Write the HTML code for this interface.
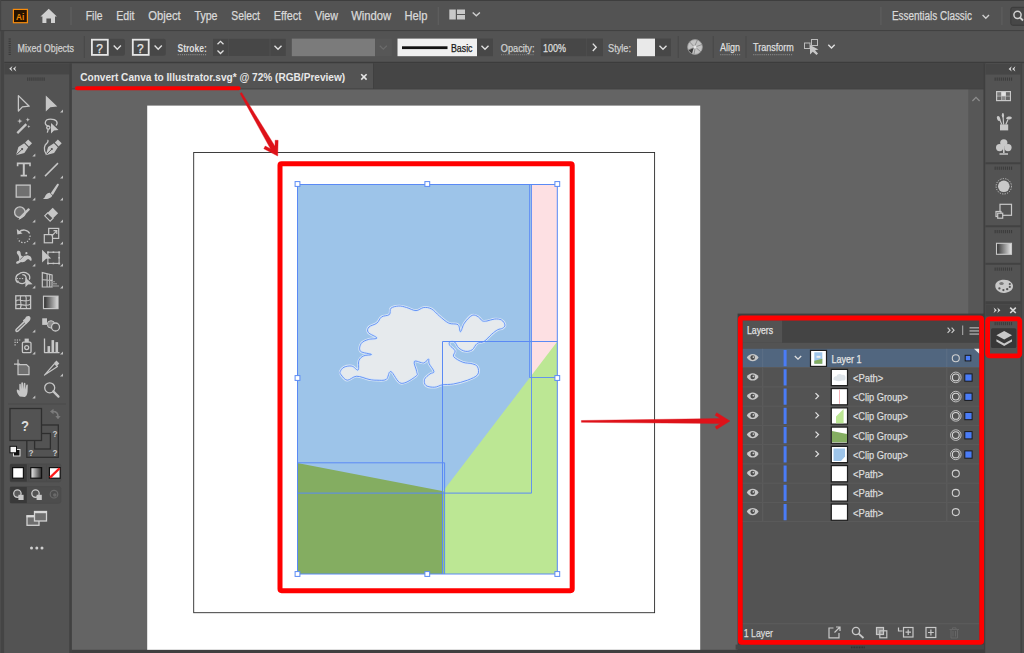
<!DOCTYPE html>
<html><head><meta charset="utf-8"><title>Illustrator</title>
<style>html,body{margin:0;padding:0;background:#535353;overflow:hidden}svg{display:block}text{font-family:"Liberation Sans", sans-serif;}</style></head>
<body><svg width="1024" height="653" viewBox="0 0 1024 653">
<rect x="0" y="0" width="1024" height="653" fill="#535353" />
<rect x="0" y="0" width="1024" height="1" fill="#3e3e3e" />
<rect x="0" y="0" width="1.2" height="31" fill="#454545" />
<rect x="0" y="30" width="1024" height="1.3" fill="#414141" />
<rect x="0.6" y="31" width="3.7" height="622" fill="#444444" />
<rect x="4.3" y="31.3" width="1020" height="30.5" fill="#535353" />
<rect x="4.3" y="61.8" width="1020" height="1.6" fill="#3c3c3c" />
<rect x="13.4" y="9.4" width="14" height="13.3" fill="#261300" stroke="#fa8c0a" stroke-width="1.2"/>
<text x="16" y="20.2" font-size="9" fill="#ee8a06" font-weight="700" textLength="8.2" lengthAdjust="spacingAndGlyphs" >Ai</text>
<path d="M40.5 16.6 L48.7 8.7 L56.9 16.6 L55 16.6 L55 23 L51 23 L51 18.5 L46.4 18.5 L46.4 23 L42.4 23 L42.4 16.6 Z" fill="#d0d0d0"/>
<rect x="70.4" y="7" width="1.2" height="18" fill="#5f5f5f" />
<text x="85.75" y="20" font-size="12" fill="#d9d9d9" stroke="#d9d9d9" stroke-width="0.25" textLength="16.75" lengthAdjust="spacingAndGlyphs" >File</text>
<text x="116.25" y="20" font-size="12" fill="#d9d9d9" stroke="#d9d9d9" stroke-width="0.25" textLength="18.25" lengthAdjust="spacingAndGlyphs" >Edit</text>
<text x="148.25" y="20" font-size="12" fill="#d9d9d9" stroke="#d9d9d9" stroke-width="0.25" textLength="32.5" lengthAdjust="spacingAndGlyphs" >Object</text>
<text x="194.5" y="20" font-size="12" fill="#d9d9d9" stroke="#d9d9d9" stroke-width="0.25" textLength="23" lengthAdjust="spacingAndGlyphs" >Type</text>
<text x="231.25" y="20" font-size="12" fill="#d9d9d9" stroke="#d9d9d9" stroke-width="0.25" textLength="28.75" lengthAdjust="spacingAndGlyphs" >Select</text>
<text x="273.75" y="20" font-size="12" fill="#d9d9d9" stroke="#d9d9d9" stroke-width="0.25" textLength="27.5" lengthAdjust="spacingAndGlyphs" >Effect</text>
<text x="315" y="20" font-size="12" fill="#d9d9d9" stroke="#d9d9d9" stroke-width="0.25" textLength="23" lengthAdjust="spacingAndGlyphs" >View</text>
<text x="351.25" y="20" font-size="12" fill="#d9d9d9" stroke="#d9d9d9" stroke-width="0.25" textLength="40" lengthAdjust="spacingAndGlyphs" >Window</text>
<text x="404.5" y="20" font-size="12" fill="#d9d9d9" stroke="#d9d9d9" stroke-width="0.25" textLength="23" lengthAdjust="spacingAndGlyphs" >Help</text>
<rect x="437.7" y="7" width="1.2" height="18" fill="#5f5f5f" />
<rect x="449.3" y="9.5" width="6.5" height="10" fill="#c8c8c8" />
<rect x="457" y="9.5" width="8" height="4.5" fill="#c8c8c8" />
<rect x="457" y="15" width="8" height="4.5" fill="#c8c8c8" />
<path d="M472.7 12.4 L476.3 15.8 L479.9 12.4" fill="none" stroke="#cfcfcf" stroke-width="1.4"/>
<rect x="880.3" y="7" width="1.2" height="18" fill="#5f5f5f" />
<text x="892" y="19.7" font-size="12" fill="#d9d9d9" stroke="#d9d9d9" stroke-width="0.25" textLength="80" lengthAdjust="spacingAndGlyphs" >Essentials Classic</text>
<path d="M982.6 15 L985.8 18.2 L989 15" fill="none" stroke="#cfcfcf" stroke-width="1.4"/>
<rect x="1001.3" y="7" width="1.2" height="18" fill="#5f5f5f" />
<rect x="1010.8" y="7.3" width="20" height="18" rx="2" fill="#474747" stroke="#3a3a3a" stroke-width="1"/>
<circle cx="1017.5" cy="14.8" r="3.6" fill="none" stroke="#d0d0d0" stroke-width="1.5"/><path d="M1020 17.5 L1023 20.5" stroke="#d0d0d0" stroke-width="1.8"/>
<rect x="8.6" y="38.5" width="2.2" height="1.1" fill="#3a3a3a" />
<rect x="8.6" y="40.7" width="2.2" height="1.1" fill="#3a3a3a" />
<rect x="8.6" y="42.9" width="2.2" height="1.1" fill="#3a3a3a" />
<rect x="8.6" y="45.1" width="2.2" height="1.1" fill="#3a3a3a" />
<rect x="8.6" y="47.3" width="2.2" height="1.1" fill="#3a3a3a" />
<rect x="8.6" y="49.5" width="2.2" height="1.1" fill="#3a3a3a" />
<rect x="8.6" y="51.7" width="2.2" height="1.1" fill="#3a3a3a" />
<rect x="8.6" y="53.900000000000006" width="2.2" height="1.1" fill="#3a3a3a" />
<text x="17.6" y="52.1" font-size="10" fill="#cfcfcf" stroke="#cfcfcf" stroke-width="0.25" textLength="56.4" lengthAdjust="spacingAndGlyphs" >Mixed Objects</text>
<rect x="83.8" y="36" width="1" height="22" fill="#484848" />
<rect x="105" y="38.8" width="19.9" height="17" rx="2" fill="#474747"/>
<rect x="91.9" y="39.7" width="15.9" height="15.2" fill="#4a4a4a" stroke="#e6e6e6" stroke-width="1.8"/>
<text x="96.2" y="52.7" font-size="12" fill="#e6e6e6" stroke="#e6e6e6" stroke-width="0.25" textLength="6.6" lengthAdjust="spacingAndGlyphs" >?</text>
<path d="M113.7 45.6 L117.3 49.2 L120.9 45.6" fill="none" stroke="#e0e0e0" stroke-width="1.4"/>
<rect x="145.9" y="38.8" width="19.9" height="17" rx="2" fill="#474747"/>
<rect x="132.8" y="39.7" width="15.9" height="15.2" fill="#4a4a4a" stroke="#e6e6e6" stroke-width="1.8"/>
<text x="137.1" y="52.7" font-size="12" fill="#e6e6e6" stroke="#e6e6e6" stroke-width="0.25" textLength="6.6" lengthAdjust="spacingAndGlyphs" >?</text>
<path d="M154.6 45.6 L158.20000000000002 49.2 L161.8 45.6" fill="none" stroke="#e0e0e0" stroke-width="1.4"/>
<text x="177.5" y="51.5" font-size="10" fill="#dedede" font-weight="700" textLength="29.3" lengthAdjust="spacingAndGlyphs" >Stroke:</text>
<rect x="177.7" y="54.3" width="1.1" height="0.9" fill="#a0a0a0" />
<rect x="179.79999999999998" y="54.3" width="1.1" height="0.9" fill="#a0a0a0" />
<rect x="181.89999999999998" y="54.3" width="1.1" height="0.9" fill="#a0a0a0" />
<rect x="184.0" y="54.3" width="1.1" height="0.9" fill="#a0a0a0" />
<rect x="186.1" y="54.3" width="1.1" height="0.9" fill="#a0a0a0" />
<rect x="188.2" y="54.3" width="1.1" height="0.9" fill="#a0a0a0" />
<rect x="190.29999999999998" y="54.3" width="1.1" height="0.9" fill="#a0a0a0" />
<rect x="192.39999999999998" y="54.3" width="1.1" height="0.9" fill="#a0a0a0" />
<rect x="194.5" y="54.3" width="1.1" height="0.9" fill="#a0a0a0" />
<rect x="196.6" y="54.3" width="1.1" height="0.9" fill="#a0a0a0" />
<rect x="198.7" y="54.3" width="1.1" height="0.9" fill="#a0a0a0" />
<rect x="200.79999999999998" y="54.3" width="1.1" height="0.9" fill="#a0a0a0" />
<rect x="202.89999999999998" y="54.3" width="1.1" height="0.9" fill="#a0a0a0" />
<rect x="205.0" y="54.3" width="1.1" height="0.9" fill="#a0a0a0" />
<rect x="213" y="38.8" width="15" height="17.2" fill="#474747" />
<path d="M217.5 44.3 L220.5 41.3 L223.5 44.3 M217.5 50.5 L220.5 53.5 L223.5 50.5" fill="none" stroke="#e0e0e0" stroke-width="1.3"/>
<rect x="228.6" y="38.8" width="41" height="17.2" fill="#474747" />
<rect x="270.4" y="38.8" width="15.4" height="17.2" fill="#474747" />
<path d="M274.5 45.8 L278 49.2 L281.5 45.8" fill="none" stroke="#e0e0e0" stroke-width="1.4"/>
<rect x="291.8" y="38.6" width="83.3" height="17.6" fill="#7b7b7b" />
<rect x="375.1" y="38.6" width="16.7" height="17.6" fill="#575757" />
<path d="M379.8 45.8 L383.3 49.2 L386.8 45.8" fill="none" stroke="#6b6b6b" stroke-width="1.3"/>
<rect x="397.5" y="38.6" width="79.5" height="17.6" fill="#f0f0f0" />
<rect x="402" y="46.3" width="45.5" height="2.8" fill="#111111" />
<text x="451" y="52.1" font-size="10" fill="#1a1a1a" stroke="#1a1a1a" stroke-width="0.25" textLength="21.5" lengthAdjust="spacingAndGlyphs" >Basic</text>
<rect x="477" y="38.6" width="16" height="17.6" fill="#474747" />
<path d="M481.5 45.8 L485 49.2 L488.5 45.8" fill="none" stroke="#e0e0e0" stroke-width="1.4"/>
<text x="500.8" y="52.1" font-size="10" fill="#cfcfcf" stroke="#cfcfcf" stroke-width="0.25" textLength="33.7" lengthAdjust="spacingAndGlyphs" >Opacity:</text>
<rect x="501.0" y="54.3" width="1.1" height="0.9" fill="#8a8a8a" />
<rect x="503.1" y="54.3" width="1.1" height="0.9" fill="#8a8a8a" />
<rect x="505.2" y="54.3" width="1.1" height="0.9" fill="#8a8a8a" />
<rect x="507.3" y="54.3" width="1.1" height="0.9" fill="#8a8a8a" />
<rect x="509.4" y="54.3" width="1.1" height="0.9" fill="#8a8a8a" />
<rect x="511.5" y="54.3" width="1.1" height="0.9" fill="#8a8a8a" />
<rect x="513.6" y="54.3" width="1.1" height="0.9" fill="#8a8a8a" />
<rect x="515.7" y="54.3" width="1.1" height="0.9" fill="#8a8a8a" />
<rect x="517.8" y="54.3" width="1.1" height="0.9" fill="#8a8a8a" />
<rect x="519.9" y="54.3" width="1.1" height="0.9" fill="#8a8a8a" />
<rect x="522.0" y="54.3" width="1.1" height="0.9" fill="#8a8a8a" />
<rect x="524.1" y="54.3" width="1.1" height="0.9" fill="#8a8a8a" />
<rect x="526.2" y="54.3" width="1.1" height="0.9" fill="#8a8a8a" />
<rect x="528.3" y="54.3" width="1.1" height="0.9" fill="#8a8a8a" />
<rect x="530.4" y="54.3" width="1.1" height="0.9" fill="#8a8a8a" />
<rect x="532.5" y="54.3" width="1.1" height="0.9" fill="#8a8a8a" />
<rect x="540.8" y="38.6" width="45.2" height="17.6" fill="#474747" />
<text x="543" y="52.1" font-size="10" fill="#dedede" stroke="#dedede" stroke-width="0.25" textLength="23" lengthAdjust="spacingAndGlyphs" >100%</text>
<rect x="586.5" y="38.6" width="16.5" height="17.6" fill="#474747" />
<path d="M592.8 43.6 L596.2 47.3 L592.8 51" fill="none" stroke="#e0e0e0" stroke-width="1.4"/>
<text x="608" y="52.1" font-size="10" fill="#cfcfcf" stroke="#cfcfcf" stroke-width="0.25" textLength="23" lengthAdjust="spacingAndGlyphs" >Style:</text>
<rect x="637" y="38.6" width="18" height="17.6" fill="#e9e9e9" />
<rect x="655" y="38.6" width="16" height="17.6" fill="#474747" />
<path d="M659.5 45.8 L663 49.2 L666.5 45.8" fill="none" stroke="#e0e0e0" stroke-width="1.4"/>
<rect x="677.7" y="36" width="1" height="22" fill="#484848" />
<circle cx="695" cy="47" r="7.4" fill="#c4c4c4" stroke="#9a9a9a" stroke-width="0.8"/><circle cx="695" cy="47" r="1.6" fill="#e8e8e8"/>
<path d="M695 45.4 L697.5 39.8 M696.5 46.5 L702 44.5 M696.4 48 L701 52 M695 48.6 L694 54.3 M693.5 47.8 L688 50 M693.6 46.2 L689.5 41.8" stroke="#8a8a8a" stroke-width="0.9"/><path d="M688.5 50.2 L693.6 48 L692 53.8 Z" fill="#3a3a3a"/>
<rect x="712.7" y="36" width="1" height="22" fill="#484848" />
<text x="720" y="51.3" font-size="10" fill="#dedede" stroke="#dedede" stroke-width="0.25" textLength="20" lengthAdjust="spacingAndGlyphs" >Align</text>
<rect x="720.2" y="54.3" width="1.1" height="0.9" fill="#9a9a9a" />
<rect x="722.3000000000001" y="54.3" width="1.1" height="0.9" fill="#9a9a9a" />
<rect x="724.4000000000001" y="54.3" width="1.1" height="0.9" fill="#9a9a9a" />
<rect x="726.5" y="54.3" width="1.1" height="0.9" fill="#9a9a9a" />
<rect x="728.6" y="54.3" width="1.1" height="0.9" fill="#9a9a9a" />
<rect x="730.7" y="54.3" width="1.1" height="0.9" fill="#9a9a9a" />
<rect x="732.8000000000001" y="54.3" width="1.1" height="0.9" fill="#9a9a9a" />
<rect x="734.9000000000001" y="54.3" width="1.1" height="0.9" fill="#9a9a9a" />
<rect x="737.0" y="54.3" width="1.1" height="0.9" fill="#9a9a9a" />
<rect x="739.1" y="54.3" width="1.1" height="0.9" fill="#9a9a9a" />
<rect x="745.5" y="36" width="1" height="22" fill="#484848" />
<text x="753" y="51.3" font-size="10" fill="#dedede" stroke="#dedede" stroke-width="0.25" textLength="40.8" lengthAdjust="spacingAndGlyphs" >Transform</text>
<rect x="753.2" y="54.3" width="1.1" height="0.9" fill="#9a9a9a" />
<rect x="755.3000000000001" y="54.3" width="1.1" height="0.9" fill="#9a9a9a" />
<rect x="757.4000000000001" y="54.3" width="1.1" height="0.9" fill="#9a9a9a" />
<rect x="759.5" y="54.3" width="1.1" height="0.9" fill="#9a9a9a" />
<rect x="761.6" y="54.3" width="1.1" height="0.9" fill="#9a9a9a" />
<rect x="763.7" y="54.3" width="1.1" height="0.9" fill="#9a9a9a" />
<rect x="765.8000000000001" y="54.3" width="1.1" height="0.9" fill="#9a9a9a" />
<rect x="767.9000000000001" y="54.3" width="1.1" height="0.9" fill="#9a9a9a" />
<rect x="770.0" y="54.3" width="1.1" height="0.9" fill="#9a9a9a" />
<rect x="772.1" y="54.3" width="1.1" height="0.9" fill="#9a9a9a" />
<rect x="774.2" y="54.3" width="1.1" height="0.9" fill="#9a9a9a" />
<rect x="776.3000000000001" y="54.3" width="1.1" height="0.9" fill="#9a9a9a" />
<rect x="778.4000000000001" y="54.3" width="1.1" height="0.9" fill="#9a9a9a" />
<rect x="780.5" y="54.3" width="1.1" height="0.9" fill="#9a9a9a" />
<rect x="782.6" y="54.3" width="1.1" height="0.9" fill="#9a9a9a" />
<rect x="784.7" y="54.3" width="1.1" height="0.9" fill="#9a9a9a" />
<rect x="786.8000000000001" y="54.3" width="1.1" height="0.9" fill="#9a9a9a" />
<rect x="788.9000000000001" y="54.3" width="1.1" height="0.9" fill="#9a9a9a" />
<rect x="791.0" y="54.3" width="1.1" height="0.9" fill="#9a9a9a" />
<rect x="804.5" y="43" width="5.5" height="5.5" fill="none" stroke="#bcbcbc" stroke-width="1"/>
<rect x="811.5" y="39.5" width="6" height="6" fill="none" stroke="#bcbcbc" stroke-width="1"/>
<path d="M810 45 L810 54.5 L812.8 51.8 L816.5 55 L818 53.5 L815 50.2 L818.5 49.5 Z" fill="#c8c8c8"/>
<path d="M828.3 44.8 L831.5 48 L834.7 44.8" fill="none" stroke="#e0e0e0" stroke-width="1.4"/>
<rect x="4.3" y="63.4" width="65.2" height="590" fill="#535353" />
<rect x="4.3" y="63.4" width="65.2" height="11" fill="#464646" />
<path d="M12.5 66 L9.2 68.8 L12.5 71.6 L11.3 68.8 Z M16.3 66 L13 68.8 L16.3 71.6 L15.1 68.8 Z" fill="#dcdcdc"/>
<rect x="27.2" y="77.4" width="1.1" height="3.4" fill="#3c3c3c" />
<rect x="29.25" y="77.4" width="1.1" height="3.4" fill="#3c3c3c" />
<rect x="31.299999999999997" y="77.4" width="1.1" height="3.4" fill="#3c3c3c" />
<rect x="33.35" y="77.4" width="1.1" height="3.4" fill="#3c3c3c" />
<rect x="35.4" y="77.4" width="1.1" height="3.4" fill="#3c3c3c" />
<rect x="37.45" y="77.4" width="1.1" height="3.4" fill="#3c3c3c" />
<rect x="39.5" y="77.4" width="1.1" height="3.4" fill="#3c3c3c" />
<rect x="41.55" y="77.4" width="1.1" height="3.4" fill="#3c3c3c" />
<rect x="43.599999999999994" y="77.4" width="1.1" height="3.4" fill="#3c3c3c" />
<rect x="69.3" y="63.4" width="2.6" height="590" fill="#414141" />
<g transform="translate(15.8,95.6)"><path d="M2.6 0 L2.6 15.5 L6.6 11.3 L13.4 10.6 Z" fill="none" stroke="#c6c6c6" stroke-width="1.3" stroke-linejoin="round"/></g>
<g transform="translate(43.5,95.6)"><path d="M2.3 0 L2.3 16 L6.8 11.6 L13.8 10.9 Z" fill="#c6c6c6"/></g>
<path d="M60.0 112.39999999999999 L63.0 112.39999999999999 L63.0 109.39999999999999 Z" fill="#c0c0c0"/>
<g transform="translate(15.8,117.6)"><path d="M1.5 15.5 L10.5 6.5" stroke="#c6c6c6" stroke-width="2.2"/><path d="M4 1 L4.7 3 L6.7 3.5 L4.7 4.2 L4 6.2 L3.3 4.2 L1.3 3.5 L3.3 3 Z M12 0 L12.6 1.6 L14.2 2.1 L12.6 2.6 L12 4.2 L11.4 2.6 L9.8 2.1 L11.4 1.6 Z M13 7.5 L13.5 8.6 L14.6 9 L13.5 9.4 L13 10.5 L12.5 9.4 L11.4 9 L12.5 8.6 Z" fill="#c6c6c6"/></g>
<g transform="translate(43.5,117.6)"><path d="M5 8.5 C0 7 1 1.5 7 1.5 C13 1.5 15 5 12.5 8" fill="none" stroke="#c6c6c6" stroke-width="1.3" stroke-linejoin="round"/><circle cx="4.8" cy="10" r="1.6" fill="none" stroke="#c6c6c6" stroke-width="1.3" stroke-linejoin="round"/><path d="M4.8 11.5 L3.8 15" fill="none" stroke="#c6c6c6" stroke-width="1.3" stroke-linejoin="round"/><path d="M7.5 5.5 L7.5 16 L10.5 12.8 L15 12.5 Z" fill="#c6c6c6"/></g>
<g transform="translate(15.8,139.6)"><path d="M0.2 15.6 L2.6 7.4 L8.4 3.6 L12.4 7.6 L8.6 13.4 Z" fill="#c6c6c6"/><path d="M9.3 3 L12.4 -0.1 L16.2 3.7 L13.1 6.8 Z" fill="#c6c6c6"/><path d="M0.6 15.2 L5.8 10" stroke="#535353" stroke-width="1"/><circle cx="6.3" cy="9.5" r="1.1" fill="#535353"/></g>
<path d="M32.3 156.4 L35.3 156.4 L35.3 153.4 Z" fill="#c0c0c0"/>
<g transform="translate(43.5,139.6)"><g transform="translate(2,0)"><path d="M0.2 15.6 L2.6 7.4 L8.4 3.6 L12.4 7.6 L8.6 13.4 Z" fill="#c6c6c6"/><path d="M9.3 3 L12.4 -0.1 L16.2 3.7 L13.1 6.8 Z" fill="#c6c6c6"/><path d="M0.6 15.2 L5.8 10" stroke="#535353" stroke-width="1"/><circle cx="6.3" cy="9.5" r="1.1" fill="#535353"/></g><path d="M3 15 C-1 10 1.5 5 3 4 C4.5 2.5 5 1 4 0.5" fill="none" stroke="#c6c6c6" stroke-width="1.3" stroke-linejoin="round" stroke-width="1"/></g>
<g transform="translate(15.8,161.6)"><path d="M1 0.8 L15 0.8 L15 4.6 L13.4 4.6 L13.4 2.6 L9 2.6 L9 13.2 L11.2 13.2 L11.2 14.8 L4.8 14.8 L4.8 13.2 L7 13.2 L7 2.6 L2.6 2.6 L2.6 4.6 L1 4.6 Z" fill="#c6c6c6"/></g>
<path d="M32.3 178.4 L35.3 178.4 L35.3 175.4 Z" fill="#c0c0c0"/>
<g transform="translate(43.5,161.6)"><path d="M1.5 14.5 L14.5 1.5" stroke="#c6c6c6" stroke-width="1.5"/></g>
<path d="M60.0 178.4 L63.0 178.4 L63.0 175.4 Z" fill="#c0c0c0"/>
<g transform="translate(15.7,183.6)"><rect x="0.5" y="1.5" width="14" height="12" fill="#707070" stroke="#c6c6c6" stroke-width="1.3"/></g>
<path d="M32.3 200.4 L35.3 200.4 L35.3 197.4 Z" fill="#c0c0c0"/>
<g transform="translate(43.5,183.6)"><path d="M7.2 9.6 L13.6 0.4 C14.4 -0.4 15.8 0.6 15.3 1.5 L9.4 11.4 Z" fill="#c6c6c6"/><path d="M6.2 9.2 C3.6 9 2 11.5 1.4 13.2 C1 14.4 0 15 -0.6 15.3 C2.5 15.8 7.5 15 8.8 11.8 Z" fill="#c6c6c6"/></g>
<path d="M60.0 200.4 L63.0 200.4 L63.0 197.4 Z" fill="#c0c0c0"/>
<g transform="translate(14.3,205.6)"><circle cx="5.6" cy="6.6" r="5.3" fill="#707070" stroke="#c6c6c6" stroke-width="1.4"/><path d="M4.2 14.4 L5.5 11 L13.6 2.8 C14.4 2 16.2 3.6 15.4 4.5 L7.3 12.7 Z" fill="#c6c6c6"/></g>
<path d="M32.3 222.4 L35.3 222.4 L35.3 219.4 Z" fill="#c0c0c0"/>
<g transform="translate(43.5,205.6)"><path d="M1.2 10.2 L9.2 2.2 L14.6 7.6 L6.6 15.6 Z" fill="#c6c6c6"/><path d="M1.2 10.2 L4.2 7.2 L9.6 12.6 L6.6 15.6 Z" fill="#535353" stroke="#c6c6c6" stroke-width="1.1"/></g>
<path d="M60.0 222.4 L63.0 222.4 L63.0 219.4 Z" fill="#c0c0c0"/>
<g transform="translate(15.8,227.6)"><path d="M3.2 4.5 C6 1.5 12 1.5 13.8 6" fill="none" stroke="#c6c6c6" stroke-width="1.3" stroke-linejoin="round" stroke-width="1.5"/><path d="M1 1.5 L1.5 7 L6.8 5.8 Z" fill="#c6c6c6"/><path d="M14.2 8 C14.5 12 11 15.5 7 15 C4 14.6 2.5 12.5 2 11" fill="none" stroke="#c6c6c6" stroke-width="1.3" stroke-dasharray="1.3 1.6"/></g>
<path d="M32.3 244.4 L35.3 244.4 L35.3 241.4 Z" fill="#c0c0c0"/>
<g transform="translate(43.5,227.6)"><rect x="5.2" y="0.8" width="10" height="10" fill="none" stroke="#c6c6c6" stroke-width="1.2"/><rect x="0.8" y="7" width="8.2" height="8.2" fill="#535353" stroke="#c6c6c6" stroke-width="1.2"/><path d="M8 8.5 L13 3.5 M10 3 L13.3 3 L13.3 6.3" fill="none" stroke="#c6c6c6" stroke-width="1.2"/></g>
<path d="M60.0 244.4 L63.0 244.4 L63.0 241.4 Z" fill="#c0c0c0"/>
<g transform="translate(15.8,249.60000000000002)"><path d="M1 3 C1 1 3.5 0.6 4.6 2.4 C5.2 4 4.6 5.5 6.2 6.5 C8 7.4 10 5.5 12.5 5.8 C15 6.1 16.2 8.5 15.7 10.8 C15.2 11.6 14.1 11.2 13.6 10.1 C12.8 9.2 11.2 9.6 10.2 11 C9 12.6 7 13 5.2 12.4 L2.6 14 C1.5 14.6 0 14.1 0.3 12.9 C0.6 11.8 2 11.6 3 11.2 C3.8 9 3.4 7.2 2.5 5.6 C1.8 4.8 1 4 1 3 Z" fill="#c6c6c6"/><path d="M4.2 10.2 L10.6 3.6" stroke="#6a6a6a" stroke-width="0.9"/><circle cx="10.6" cy="3.6" r="1.1" fill="#c6c6c6"/></g>
<path d="M32.3 266.40000000000003 L35.3 266.40000000000003 L35.3 263.40000000000003 Z" fill="#c0c0c0"/>
<g transform="translate(43.5,249.60000000000002)"><path d="M-1.4 0.2 L-1.4 12.9 L2.6 9.2 L7.7 8.9 Z" fill="#c6c6c6"/><rect x="4.4" y="2.6" width="11.2" height="11.2" fill="none" stroke="#c6c6c6" stroke-width="1.1"/><rect x="3.6" y="1.8" width="1.8" height="1.8" fill="#c6c6c6"/><rect x="14.8" y="1.8" width="1.8" height="1.8" fill="#c6c6c6"/><rect x="14.8" y="13" width="1.8" height="1.8" fill="#c6c6c6"/><rect x="3.6" y="13" width="1.8" height="1.8" fill="#c6c6c6"/><rect x="9.1" y="1.9" width="1.6" height="1.5" fill="#c6c6c6"/><rect x="9.1" y="13.1" width="1.6" height="1.5" fill="#c6c6c6"/><rect x="14.9" y="7.4" width="1.5" height="1.6" fill="#c6c6c6"/></g>
<path d="M60.0 266.40000000000003 L63.0 266.40000000000003 L63.0 263.40000000000003 Z" fill="#c0c0c0"/>
<g transform="translate(15.8,271.6)"><path d="M2 11 C-1 9 -0.5 3.5 3 2.5 C5 0.5 9.5 0.2 11.5 2 C14 2.8 14.5 6 13.5 8" fill="none" stroke="#c6c6c6" stroke-width="1.3" stroke-linejoin="round" stroke-width="1.3"/><path d="M6.5 3 C9 3 10.5 5 10.5 7.5 C10.5 10 9 12 6.5 12 C4 12 2 10.5 2 9" fill="none" stroke="#c6c6c6" stroke-width="1.3" stroke-linejoin="round" stroke-width="1.1"/><path d="M0.8 7 L8.6 7" stroke="#c6c6c6" stroke-width="1" stroke-dasharray="1.4 1.2"/><path d="M9.6 6 L9.6 15.6 L12.3 13 L16.8 12.6 Z" fill="#c6c6c6"/></g>
<path d="M32.3 288.40000000000003 L35.3 288.40000000000003 L35.3 285.40000000000003 Z" fill="#c0c0c0"/>
<g transform="translate(43.5,271.6)"><path d="M-1.2 1 L8.6 3.4 L8.6 15.4 L-1.2 15.4 Z" fill="none" stroke="#c6c6c6" stroke-width="1.2"/><path d="M3.6 2.2 L3.6 15.4 M-1.2 8.2 L8.6 8.8 M6.2 2.8 L6.2 15.4" stroke="#c6c6c6" stroke-width="1.1"/><path d="M8.6 14.4 L15.5 14.4 M8.6 12.2 L13.5 12.2 M8.6 10 L11.5 10" stroke="#8c8c8c" stroke-width="1.4"/></g>
<path d="M60.0 288.40000000000003 L63.0 288.40000000000003 L63.0 285.40000000000003 Z" fill="#c0c0c0"/>
<g transform="translate(15.8,293.6)"><rect x="0" y="2.2" width="14.8" height="12.8" fill="none" stroke="#c6c6c6" stroke-width="1.3"/><path d="M0 7.5 C4 4 8 10 14.8 6 M0 11.5 C5 9 9 14 14.8 10.5 M5 2.2 C3 6 7 10 4.5 15 M9.8 2.2 C12 6 8.5 11 11 15" fill="none" stroke="#c6c6c6" stroke-width="1.1"/></g>
<g transform="translate(43.5,293.6)"><defs><linearGradient id="tg1"><stop offset="0" stop-color="#2a2a2a"/><stop offset="1" stop-color="#dcdcdc"/></linearGradient></defs><rect x="0" y="2.6" width="14.5" height="12.4" fill="url(#tg1)" stroke="#c6c6c6" stroke-width="1.2"/></g>
<g transform="translate(15.8,315.6)"><path d="M8.6 6 L0.6 13.6 C-0.6 14.8 0.6 16.6 2 15.6 L10.2 7.6" fill="none" stroke="#c6c6c6" stroke-width="1.5" stroke-linejoin="round"/><path d="M7 4.8 L9.5 2.6 C10 0.4 13.6 -0.2 14.3 1.5 C15.4 2.8 14.2 5.6 12.4 6.6 L10.5 8.6 Z" fill="#c6c6c6"/></g>
<path d="M32.3 332.40000000000003 L35.3 332.40000000000003 L35.3 329.40000000000003 Z" fill="#c0c0c0"/>
<g transform="translate(43.5,315.6)"><rect x="-1.3" y="2.7" width="4.8" height="6.6" fill="#c6c6c6"/><circle cx="7.5" cy="8.8" r="3.7" fill="#8a8a8a" stroke="#c6c6c6" stroke-width="1"/><circle cx="12" cy="11.4" r="4" fill="#535353" stroke="#c6c6c6" stroke-width="1.3"/></g>
<g transform="translate(15.8,337.6)"><rect x="6.6" y="4.5" width="8.6" height="10.6" rx="1.2" fill="none" stroke="#c6c6c6" stroke-width="1.3"/><rect x="8.8" y="1" width="4.2" height="3.4" fill="#c6c6c6"/><circle cx="10.9" cy="10" r="2" fill="none" stroke="#c6c6c6" stroke-width="1.3" stroke-linejoin="round" stroke-width="1.2"/><path d="M-1.3 2.4 h1.2 M1 2.4 h1.2 M3.3 2.4 h1.2 M-1.3 4.8 h1.2 M1 4.8 h1.2 M-1.3 7.2 h1.2" stroke="#c6c6c6" stroke-width="1.2"/></g>
<path d="M32.3 354.40000000000003 L35.3 354.40000000000003 L35.3 351.40000000000003 Z" fill="#c0c0c0"/>
<g transform="translate(43.5,337.6)"><path d="M1 1 L1 15 L16 15" fill="none" stroke="#c6c6c6" stroke-width="1.3" stroke-linejoin="round" stroke-width="1.2"/><rect x="4" y="8.5" width="2.6" height="6.5" fill="#c6c6c6"/><rect x="8" y="2.5" width="2.6" height="12.5" fill="#c6c6c6"/><rect x="12" y="4.5" width="2.6" height="10.5" fill="#c6c6c6"/></g>
<path d="M60.0 354.40000000000003 L63.0 354.40000000000003 L63.0 351.40000000000003 Z" fill="#c0c0c0"/>
<g transform="translate(14.0,359.6)"><path d="M4 5 L4 15 L15 15 L15 7.5 L12.5 5 Z" fill="#707070" stroke="#c6c6c6" stroke-width="1.2"/><path d="M0 4.5 L6 4.5 M4 0 L4 6" stroke="#c6c6c6" stroke-width="1.2"/></g>
<g transform="translate(43.5,359.6)"><path d="M1 15.5 L11 4 L14 7 Z" fill="none" stroke="#c6c6c6" stroke-width="1.2" stroke-linejoin="round"/><path d="M10.5 3.5 L13 1 L15.8 3.8 L13.5 6.5 Z" fill="#c6c6c6"/></g>
<path d="M60.0 376.40000000000003 L63.0 376.40000000000003 L63.0 373.40000000000003 Z" fill="#c0c0c0"/>
<g transform="translate(15.8,381.6)"><path d="M4 15 C2 13 0.5 10 1 8.5 C1.5 7.5 2.5 8 3.5 9.5 L3.5 3 C3.5 2 5 2 5 3 L5.3 7.5 L5.5 1.5 C5.5 0.5 7.2 0.5 7.2 1.5 L7.5 7.5 L8 2 C8 1 9.6 1 9.6 2 L9.6 8 L10.5 3.5 C10.7 2.5 12.2 2.6 12 3.7 L11.8 10 C11.5 13 10.5 15 9 15.5 Z" fill="#c6c6c6"/></g>
<path d="M32.3 398.40000000000003 L35.3 398.40000000000003 L35.3 395.40000000000003 Z" fill="#c0c0c0"/>
<g transform="translate(43.5,381.6)"><circle cx="6.2" cy="6.2" r="5" fill="none" stroke="#c6c6c6" stroke-width="1.3" stroke-linejoin="round" stroke-width="1.5"/><path d="M9.8 9.8 L15 15" stroke="#c6c6c6" stroke-width="2.2" stroke-linecap="round"/></g>
<rect x="8" y="403.5" width="58" height="1" fill="#4a4a4a" />
<path d="M53 411.5 C56.5 411.5 58 413 58 416.5" fill="none" stroke="#7c7c7c" stroke-width="1.6"/><path d="M50 411.5 L53.5 408.8 L53.5 414.2 Z M55.3 416 L60.7 416 L58 419.3 Z" fill="#7c7c7c"/>
<rect x="26.8" y="425" width="31.5" height="32.3" fill="#535353" stroke="#2e2e2e" stroke-width="1.3"/>
<rect x="34.6" y="433.5" width="15.8" height="15.5" fill="#535353" stroke="#2e2e2e" stroke-width="1.3"/>
<rect x="10" y="408.5" width="31.5" height="32" fill="#535353" stroke="#2e2e2e" stroke-width="1.3"/>
<text x="21" y="430.8" font-size="14" fill="#dcdcdc" font-weight="700" textLength="8" lengthAdjust="spacingAndGlyphs" >?</text>
<text x="52.6" y="436.5" font-size="9" fill="#c8c8c8" font-weight="700" textLength="5" lengthAdjust="spacingAndGlyphs" >?</text>
<text x="28.6" y="455.8" font-size="9" fill="#c8c8c8" font-weight="700" textLength="5" lengthAdjust="spacingAndGlyphs" >?</text>
<text x="52.6" y="455.8" font-size="9" fill="#c8c8c8" font-weight="700" textLength="5" lengthAdjust="spacingAndGlyphs" >?</text>
<rect x="13.5" y="449.5" width="6.5" height="6.5" fill="#111" stroke="#e0e0e0" stroke-width="1"/>
<rect x="10" y="446.3" width="6.5" height="6.5" fill="#f4f4f4" stroke="#111" stroke-width="1"/>
<rect x="9.9" y="463.9" width="51" height="18" rx="2" fill="#4d4d4d" stroke="#4a4a4a" stroke-width="0.8"/>
<rect x="10.2" y="464.2" width="16.6" height="17.4" fill="#3a3a3a" />
<rect x="12.6" y="467.6" width="10.8" height="10.6" fill="#ffffff" stroke="#111" stroke-width="1.2"/>
<defs><linearGradient id="tg2"><stop offset="0" stop-color="#f0f0f0"/><stop offset="1" stop-color="#2a2a2a"/></linearGradient></defs>
<rect x="30.8" y="467.6" width="10.8" height="10.6" fill="url(#tg2)" stroke="#111" stroke-width="1.2"/>
<rect x="49.4" y="467.6" width="10.8" height="10.6" fill="#ffffff" stroke="#111" stroke-width="1.2"/>
<path d="M50 477.6 L59.6 468.2" stroke="#ff1a1a" stroke-width="2.3"/>
<rect x="28.2" y="465" width="0.8" height="16" fill="#4a4a4a" />
<rect x="46.2" y="465" width="0.8" height="16" fill="#4a4a4a" />
<rect x="9.9" y="486.6" width="51" height="16.6" rx="2" fill="#4d4d4d" stroke="#4a4a4a" stroke-width="0.8"/>
<rect x="10.2" y="486.9" width="16.6" height="16.2" fill="#393939" />
<circle cx="17.4" cy="493.6" r="3.7" fill="#5a5a5a" stroke="#c8c8c8" stroke-width="1.3"/><rect x="18.4" y="494.8" width="5.2" height="5.2" fill="#c8c8c8"/>
<circle cx="35.5" cy="493.6" r="3.7" fill="#535353" stroke="#c8c8c8" stroke-width="1.3"/><rect x="36.6" y="494.8" width="5.2" height="5.2" fill="#c8c8c8"/>
<circle cx="54" cy="494.2" r="3.8" fill="none" stroke="#6a6a6a" stroke-width="1.2"/><circle cx="54.8" cy="495" r="1.8" fill="#6a6a6a"/>
<rect x="27" y="515.8" width="12" height="9.5" fill="#6e6e6e" stroke="#d2d2d2" stroke-width="1.3"/>
<rect x="26.5" y="515.2" width="13" height="2.2" fill="#d8d8d8" />
<rect x="34.5" y="511.5" width="12" height="9.5" fill="#6e6e6e" stroke="#d2d2d2" stroke-width="1.3"/>
<rect x="34" y="511" width="13" height="2.2" fill="#d8d8d8" />
<circle cx="31.5" cy="547.9" r="1.5" fill="#d0d0d0"/><circle cx="36.8" cy="547.9" r="1.5" fill="#d0d0d0"/><circle cx="42" cy="547.9" r="1.5" fill="#d0d0d0"/>
<rect x="71.9" y="63.4" width="912" height="25.6" fill="#454545" />
<rect x="71.9" y="63.4" width="301.3" height="25.3" fill="#535353" />
<rect x="373.2" y="63.4" width="0.8" height="25.3" fill="#3f3f3f" />
<rect x="71.9" y="88.7" width="912" height="0.9" fill="#404040" />
<text x="80.2" y="80.8" font-size="10.5" fill="#e8e8e8" font-weight="700" textLength="265" lengthAdjust="spacingAndGlyphs" >Convert Canva to Illustrator.svg* @ 72% (RGB/Preview)</text>
<path d="M361.2 74.2 L366.6 79.6 M366.6 74.2 L361.2 79.6" stroke="#e6e6e6" stroke-width="1.6"/>
<rect x="71.9" y="89.5" width="896.7" height="561" fill="#646464" />
<rect x="968.6" y="89.5" width="15" height="561" fill="#575757" />
<path d="M972.4 101 L976 97.4 L979.6 101" fill="none" stroke="#8c8c8c" stroke-width="1.3"/>
<rect x="71.9" y="649.8" width="912" height="3.2" fill="#3f3f3f" />
<rect x="147.2" y="105.6" width="553" height="544.2" fill="#ffffff" />
<rect x="193.7" y="152.5" width="460.9" height="460.2" fill="none" stroke="#2a2a2a" stroke-width="0.9"/>
<rect x="297.3" y="184" width="260" height="390" fill="#9dc4e9" />
<rect x="531" y="184" width="26.3" height="193.3" fill="#fde0e3" />
<path d="M442.8 491.5 L557.3 341.6 L557.3 574 L442.8 574 Z" fill="#bce794"/>
<path d="M297.3 463 L443.6 491.2 L443.6 574 L297.3 574 Z" fill="#84ad61"/>
<path d="M340.20 371.60 C340.72 370.29 341.95 368.16 344.00 367.20 C346.05 366.24 349.43 365.61 351.90 366.10 C354.37 366.59 356.88 370.96 358.10 370.00 C359.33 369.04 357.94 363.07 358.90 360.60 C359.86 358.13 361.41 356.99 363.60 355.90 C365.79 354.81 371.94 355.21 371.40 354.40 C370.86 353.59 362.28 353.18 360.50 351.25 C358.72 349.32 359.88 345.46 361.25 343.40 C362.62 341.34 365.56 340.44 368.30 339.50 C371.04 338.56 376.90 339.23 376.90 338.00 C376.90 336.77 369.68 334.43 368.30 332.50 C366.92 330.57 367.50 328.64 369.00 327.00 C370.50 325.36 374.69 324.87 376.90 323.10 C379.10 321.33 379.41 318.40 381.60 316.90 C383.79 315.39 387.77 316.00 389.40 314.50 C391.03 313.00 389.26 309.79 390.90 308.30 C392.54 306.81 396.00 306.14 398.75 306.00 C401.50 305.86 403.58 306.69 406.60 307.50 C409.62 308.31 413.00 310.60 416.00 310.60 C419.00 310.60 421.02 307.78 423.75 307.50 C426.48 307.22 428.86 307.51 431.60 309.00 C434.34 310.49 436.40 313.53 439.40 316.00 C442.40 318.47 445.50 321.58 448.75 323.10 C452.00 324.62 455.94 323.19 458.00 324.70 C460.06 326.20 459.38 331.98 460.50 331.70 C461.62 331.42 462.35 325.97 464.40 323.10 C466.45 320.23 469.75 316.38 472.20 315.30 C474.65 314.22 476.63 315.94 478.40 316.90 C480.17 317.86 480.81 320.08 482.30 320.80 C483.79 321.52 484.73 321.31 486.90 321.00 C489.07 320.69 492.14 319.18 494.70 319.00 C497.25 318.82 499.70 318.95 501.50 320.00 C503.30 321.05 504.82 323.55 505.00 325.00 C505.18 326.45 503.80 327.46 502.50 328.30 C501.20 329.14 499.48 328.77 497.60 329.80 C495.72 330.83 494.13 332.15 491.75 334.20 C489.37 336.25 486.56 339.87 484.00 341.50 C481.44 343.13 479.17 342.05 477.10 343.50 C475.04 344.95 474.25 348.44 472.20 349.80 C470.15 351.17 467.78 351.63 465.40 351.30 C463.02 350.97 460.49 349.53 458.60 347.90 C456.71 346.27 456.14 343.03 454.60 342.00 C453.06 340.97 450.64 341.41 449.80 342.00 C448.96 342.59 448.87 343.86 449.80 345.40 C450.73 346.94 454.42 348.84 455.10 350.80 C455.78 352.76 452.35 354.61 453.70 356.60 C455.05 358.60 459.56 360.95 462.80 362.20 C466.04 363.45 469.61 362.93 472.20 363.75 C474.79 364.57 476.66 364.98 477.60 366.90 C478.55 368.82 479.37 372.37 477.60 374.70 C475.83 377.03 471.74 378.57 467.50 380.20 C463.26 381.83 457.77 383.19 453.40 384.00 C449.02 384.81 445.77 384.24 442.50 384.80 C439.23 385.36 437.57 387.06 434.70 387.20 C431.83 387.34 427.89 386.97 426.10 385.60 C424.31 384.24 423.82 381.45 424.50 379.40 C425.18 377.35 428.36 375.26 430.00 373.90 C431.64 372.53 434.04 373.38 433.90 371.60 C433.76 369.82 430.16 365.95 429.20 363.75 C428.24 361.55 429.35 359.13 428.40 359.00 C427.45 358.87 426.20 362.58 423.75 363.00 C421.30 363.42 415.63 359.89 414.40 361.40 C413.17 362.90 416.44 369.00 416.70 371.60 C416.96 374.20 418.63 374.20 415.90 376.25 C413.17 378.30 405.48 384.11 401.10 383.30 C396.73 382.49 393.50 372.28 390.90 371.60 C388.30 370.92 388.70 377.89 386.25 379.40 C383.80 380.90 379.92 380.20 376.90 380.20 C373.88 380.20 372.55 380.09 369.00 379.40 C365.45 378.71 360.42 376.11 356.60 376.25 C352.79 376.39 349.93 380.47 347.20 380.20 C344.47 379.93 342.23 376.20 341.00 374.70 C339.77 373.19 339.68 372.91 340.20 371.60 Z" fill="#e6eaed" stroke="#d8e6f6" stroke-width="2.6" stroke-linejoin="round"/>
<path d="M340.20 371.60 C340.72 370.29 341.95 368.16 344.00 367.20 C346.05 366.24 349.43 365.61 351.90 366.10 C354.37 366.59 356.88 370.96 358.10 370.00 C359.33 369.04 357.94 363.07 358.90 360.60 C359.86 358.13 361.41 356.99 363.60 355.90 C365.79 354.81 371.94 355.21 371.40 354.40 C370.86 353.59 362.28 353.18 360.50 351.25 C358.72 349.32 359.88 345.46 361.25 343.40 C362.62 341.34 365.56 340.44 368.30 339.50 C371.04 338.56 376.90 339.23 376.90 338.00 C376.90 336.77 369.68 334.43 368.30 332.50 C366.92 330.57 367.50 328.64 369.00 327.00 C370.50 325.36 374.69 324.87 376.90 323.10 C379.10 321.33 379.41 318.40 381.60 316.90 C383.79 315.39 387.77 316.00 389.40 314.50 C391.03 313.00 389.26 309.79 390.90 308.30 C392.54 306.81 396.00 306.14 398.75 306.00 C401.50 305.86 403.58 306.69 406.60 307.50 C409.62 308.31 413.00 310.60 416.00 310.60 C419.00 310.60 421.02 307.78 423.75 307.50 C426.48 307.22 428.86 307.51 431.60 309.00 C434.34 310.49 436.40 313.53 439.40 316.00 C442.40 318.47 445.50 321.58 448.75 323.10 C452.00 324.62 455.94 323.19 458.00 324.70 C460.06 326.20 459.38 331.98 460.50 331.70 C461.62 331.42 462.35 325.97 464.40 323.10 C466.45 320.23 469.75 316.38 472.20 315.30 C474.65 314.22 476.63 315.94 478.40 316.90 C480.17 317.86 480.81 320.08 482.30 320.80 C483.79 321.52 484.73 321.31 486.90 321.00 C489.07 320.69 492.14 319.18 494.70 319.00 C497.25 318.82 499.70 318.95 501.50 320.00 C503.30 321.05 504.82 323.55 505.00 325.00 C505.18 326.45 503.80 327.46 502.50 328.30 C501.20 329.14 499.48 328.77 497.60 329.80 C495.72 330.83 494.13 332.15 491.75 334.20 C489.37 336.25 486.56 339.87 484.00 341.50 C481.44 343.13 479.17 342.05 477.10 343.50 C475.04 344.95 474.25 348.44 472.20 349.80 C470.15 351.17 467.78 351.63 465.40 351.30 C463.02 350.97 460.49 349.53 458.60 347.90 C456.71 346.27 456.14 343.03 454.60 342.00 C453.06 340.97 450.64 341.41 449.80 342.00 C448.96 342.59 448.87 343.86 449.80 345.40 C450.73 346.94 454.42 348.84 455.10 350.80 C455.78 352.76 452.35 354.61 453.70 356.60 C455.05 358.60 459.56 360.95 462.80 362.20 C466.04 363.45 469.61 362.93 472.20 363.75 C474.79 364.57 476.66 364.98 477.60 366.90 C478.55 368.82 479.37 372.37 477.60 374.70 C475.83 377.03 471.74 378.57 467.50 380.20 C463.26 381.83 457.77 383.19 453.40 384.00 C449.02 384.81 445.77 384.24 442.50 384.80 C439.23 385.36 437.57 387.06 434.70 387.20 C431.83 387.34 427.89 386.97 426.10 385.60 C424.31 384.24 423.82 381.45 424.50 379.40 C425.18 377.35 428.36 375.26 430.00 373.90 C431.64 372.53 434.04 373.38 433.90 371.60 C433.76 369.82 430.16 365.95 429.20 363.75 C428.24 361.55 429.35 359.13 428.40 359.00 C427.45 358.87 426.20 362.58 423.75 363.00 C421.30 363.42 415.63 359.89 414.40 361.40 C413.17 362.90 416.44 369.00 416.70 371.60 C416.96 374.20 418.63 374.20 415.90 376.25 C413.17 378.30 405.48 384.11 401.10 383.30 C396.73 382.49 393.50 372.28 390.90 371.60 C388.30 370.92 388.70 377.89 386.25 379.40 C383.80 380.90 379.92 380.20 376.90 380.20 C373.88 380.20 372.55 380.09 369.00 379.40 C365.45 378.71 360.42 376.11 356.60 376.25 C352.79 376.39 349.93 380.47 347.20 380.20 C344.47 379.93 342.23 376.20 341.00 374.70 C339.77 373.19 339.68 372.91 340.20 371.60 Z" fill="none" stroke="#5b8cf6" stroke-width="0.9" stroke-linejoin="round"/>
<path d="M297.5 184.5 H557.3 V574 H297.5 Z" fill="none" stroke="#5a8af5" stroke-width="1"/>
<path d="M442.5 341.5 H557.3 M442.5 341.5 V574" fill="none" stroke="#5a8af5" stroke-width="1"/>
<path d="M529.6 184.5 V377.5 H557.3" fill="none" stroke="#5a8af5" stroke-width="0.9"/>
<path d="M531.5 184.5 V493.1" fill="none" stroke="#5a8af5" stroke-width="0.9"/>
<path d="M297.5 462.8 H444.6 V574" fill="none" stroke="#5a8af5" stroke-width="1"/>
<path d="M297.5 493.1 H531.6" fill="none" stroke="#5a8af5" stroke-width="1"/>
<rect x="295.1" y="181.6" width="4.8" height="4.8" fill="#ffffff" stroke="#5a8af5" stroke-width="1"/>
<rect x="424.90000000000003" y="181.6" width="4.8" height="4.8" fill="#ffffff" stroke="#5a8af5" stroke-width="1"/>
<rect x="554.9" y="181.6" width="4.8" height="4.8" fill="#ffffff" stroke="#5a8af5" stroke-width="1"/>
<rect x="295.1" y="375.6" width="4.8" height="4.8" fill="#ffffff" stroke="#5a8af5" stroke-width="1"/>
<rect x="554.9" y="375.6" width="4.8" height="4.8" fill="#ffffff" stroke="#5a8af5" stroke-width="1"/>
<rect x="295.1" y="571.6" width="4.8" height="4.8" fill="#ffffff" stroke="#5a8af5" stroke-width="1"/>
<rect x="424.90000000000003" y="571.6" width="4.8" height="4.8" fill="#ffffff" stroke="#5a8af5" stroke-width="1"/>
<rect x="554.9" y="571.6" width="4.8" height="4.8" fill="#ffffff" stroke="#5a8af5" stroke-width="1"/>
<rect x="983.5" y="63.4" width="2" height="590" fill="#3f3f3f" />
<rect x="985.4" y="63.4" width="35.6" height="590" fill="#535353" />
<rect x="1020.4" y="63.4" width="1.8" height="590" fill="#434343" />
<rect x="1022.2" y="63.4" width="1.8" height="590" fill="#4e4e4e" />
<rect x="985.4" y="63.9" width="35.6" height="10.7" fill="#464646" />
<path d="M1011.8 66.2 L1008.6 68.9 L1011.8 71.6 L1010.7 68.9 Z M1015.4 66.2 L1012.2 68.9 L1015.4 71.6 L1014.3 68.9 Z" fill="#dcdcdc"/>
<rect x="985.4" y="162.3" width="35.6" height="0" fill="#535353" />
<rect x="985.4" y="225.3" width="35.6" height="0" fill="#535353" />
<rect x="985.4" y="262.8" width="35.6" height="0" fill="#535353" />
<rect x="985.4" y="301.3" width="35.6" height="0" fill="#535353" />
<rect x="985.4" y="162.3" width="35.6" height="2" fill="#424242" />
<rect x="985.4" y="225.3" width="35.6" height="2" fill="#424242" />
<rect x="985.4" y="262.8" width="35.6" height="2" fill="#424242" />
<rect x="994.6" y="77.5" width="1.1" height="3.2" fill="#3c3c3c" />
<rect x="996.65" y="77.5" width="1.1" height="3.2" fill="#3c3c3c" />
<rect x="998.7" y="77.5" width="1.1" height="3.2" fill="#3c3c3c" />
<rect x="1000.75" y="77.5" width="1.1" height="3.2" fill="#3c3c3c" />
<rect x="1002.8000000000001" y="77.5" width="1.1" height="3.2" fill="#3c3c3c" />
<rect x="1004.85" y="77.5" width="1.1" height="3.2" fill="#3c3c3c" />
<rect x="1006.9" y="77.5" width="1.1" height="3.2" fill="#3c3c3c" />
<rect x="1008.95" y="77.5" width="1.1" height="3.2" fill="#3c3c3c" />
<rect x="1011.0" y="77.5" width="1.1" height="3.2" fill="#3c3c3c" />
<rect x="994.6" y="166.6" width="1.1" height="3.2" fill="#3c3c3c" />
<rect x="996.65" y="166.6" width="1.1" height="3.2" fill="#3c3c3c" />
<rect x="998.7" y="166.6" width="1.1" height="3.2" fill="#3c3c3c" />
<rect x="1000.75" y="166.6" width="1.1" height="3.2" fill="#3c3c3c" />
<rect x="1002.8000000000001" y="166.6" width="1.1" height="3.2" fill="#3c3c3c" />
<rect x="1004.85" y="166.6" width="1.1" height="3.2" fill="#3c3c3c" />
<rect x="1006.9" y="166.6" width="1.1" height="3.2" fill="#3c3c3c" />
<rect x="1008.95" y="166.6" width="1.1" height="3.2" fill="#3c3c3c" />
<rect x="1011.0" y="166.6" width="1.1" height="3.2" fill="#3c3c3c" />
<rect x="994.6" y="230" width="1.1" height="3.2" fill="#3c3c3c" />
<rect x="996.65" y="230" width="1.1" height="3.2" fill="#3c3c3c" />
<rect x="998.7" y="230" width="1.1" height="3.2" fill="#3c3c3c" />
<rect x="1000.75" y="230" width="1.1" height="3.2" fill="#3c3c3c" />
<rect x="1002.8000000000001" y="230" width="1.1" height="3.2" fill="#3c3c3c" />
<rect x="1004.85" y="230" width="1.1" height="3.2" fill="#3c3c3c" />
<rect x="1006.9" y="230" width="1.1" height="3.2" fill="#3c3c3c" />
<rect x="1008.95" y="230" width="1.1" height="3.2" fill="#3c3c3c" />
<rect x="1011.0" y="230" width="1.1" height="3.2" fill="#3c3c3c" />
<rect x="994.6" y="267.5" width="1.1" height="3.2" fill="#3c3c3c" />
<rect x="996.65" y="267.5" width="1.1" height="3.2" fill="#3c3c3c" />
<rect x="998.7" y="267.5" width="1.1" height="3.2" fill="#3c3c3c" />
<rect x="1000.75" y="267.5" width="1.1" height="3.2" fill="#3c3c3c" />
<rect x="1002.8000000000001" y="267.5" width="1.1" height="3.2" fill="#3c3c3c" />
<rect x="1004.85" y="267.5" width="1.1" height="3.2" fill="#3c3c3c" />
<rect x="1006.9" y="267.5" width="1.1" height="3.2" fill="#3c3c3c" />
<rect x="1008.95" y="267.5" width="1.1" height="3.2" fill="#3c3c3c" />
<rect x="1011.0" y="267.5" width="1.1" height="3.2" fill="#3c3c3c" />
<rect x="996" y="91" width="15" height="10.2" fill="#c8c8c8"/>
<rect x="997.2" y="92.2" width="3.9" height="3.6" fill="#7a7a7a"/><rect x="1001.6" y="92.2" width="3.9" height="3.6" fill="#e2e2e2"/><rect x="1006" y="92.2" width="3.9" height="3.6" fill="#6a6a6a"/><rect x="997.2" y="96.4" width="3.9" height="3.6" fill="#666"/><rect x="1001.6" y="96.4" width="3.9" height="3.6" fill="#8a8a8a"/><rect x="1006" y="96.4" width="3.9" height="3.6" fill="#666"/>
<rect x="1000" y="124.4" width="8.2" height="6" fill="#c8c8c8"/><path d="M1001.8 124.5 L999.5 119 M1003.6 124.5 L1003 115.5 M1005.8 124.5 L1008 119.5" stroke="#c8c8c8" stroke-width="1.2"/><ellipse cx="998.6" cy="118.5" rx="1.6" ry="2.6" transform="rotate(-20 998.6 118.5)" fill="#c8c8c8"/><ellipse cx="1002.9" cy="115.3" rx="1.1" ry="2.2" fill="#c8c8c8"/><path d="M1006 118.5 C1007 116 1011 116 1012 118 C1010.5 119.5 1008 120.5 1006 118.5 Z" fill="#c8c8c8"/>
<circle cx="1003.8" cy="142.8" r="3.6" fill="#c8c8c8"/><circle cx="999.6" cy="147.6" r="3.6" fill="#c8c8c8"/><circle cx="1008" cy="147.6" r="3.6" fill="#c8c8c8"/><path d="M1003.8 144 L1003.8 153 M999.5 154 L1008 154" stroke="#c8c8c8" stroke-width="1.6"/>
<circle cx="1003.8" cy="186.3" r="5.8" fill="#c8c8c8"/><circle cx="1003.8" cy="186.3" r="7.7" fill="none" stroke="#c8c8c8" stroke-width="1" stroke-dasharray="1.2 1.3"/>
<rect x="1000" y="204.3" width="11.5" height="11" fill="none" stroke="#c8c8c8" stroke-width="1.2"/><rect x="996" y="211.5" width="5" height="5" fill="#535353" stroke="#c8c8c8" stroke-width="1.2"/><rect x="997.7" y="213.2" width="5" height="5" fill="#535353" stroke="#c8c8c8" stroke-width="1.2"/>
<defs><linearGradient id="dg1"><stop offset="0" stop-color="#303030"/><stop offset="1" stop-color="#e8e8e8"/></linearGradient></defs><rect x="996.5" y="243.3" width="15" height="11" fill="url(#dg1)" stroke="#c8c8c8" stroke-width="1.1"/>
<path d="M995.3 286.2 C995 282.2 999 279.6 1004.2 279.7 C1009.6 279.8 1013.3 283 1013 286.6 C1012.8 290.6 1008.6 293.1 1003.6 292.9 C999.6 292.8 995.6 290.2 995.3 286.2 Z" fill="#c8c8c8"/><ellipse cx="1001.5" cy="283.6" rx="2.2" ry="1.5" fill="#7a7a7a"/><circle cx="999.4" cy="288.4" r="1.15" fill="#535353"/><circle cx="1003.4" cy="290.1" r="1.15" fill="#535353"/><circle cx="1007.2" cy="289.2" r="1.15" fill="#535353"/><circle cx="1009.8" cy="286.9" r="1.1" fill="#535353"/><circle cx="1009.8" cy="284" r="1.1" fill="#535353"/>
<rect x="985.4" y="301.3" width="35.6" height="3" fill="#424242" />
<rect x="985.4" y="304.6" width="35.6" height="11.8" fill="#464646" />
<path d="M993.6 307.6 L996.8 310.3 L993.6 313 L994.7 310.3 Z M997.2 307.6 L1000.4 310.3 L997.2 313 L998.3 310.3 Z" fill="#dcdcdc"/>
<path d="M1010.2 307.6 L1015.8 313 M1015.8 307.6 L1010.2 313" stroke="#d8d8d8" stroke-width="1.6"/>
<rect x="991" y="328.2" width="25.3" height="19.8" rx="1.5" fill="#383838"/>
<path d="M1004.2 330.9 L1012 335.2 L1004.2 339.6 L996.4 335.2 Z" fill="#c8c8c8"/><path d="M996.4 339.2 L1004.2 343.5 L1012 339.2 L1012 341.6 L1004.2 346 L996.4 341.6 Z" fill="#c8c8c8"/>
<rect x="994.6" y="322" width="1.1" height="3.2" fill="#3c3c3c" />
<rect x="996.65" y="322" width="1.1" height="3.2" fill="#3c3c3c" />
<rect x="998.7" y="322" width="1.1" height="3.2" fill="#3c3c3c" />
<rect x="1000.75" y="322" width="1.1" height="3.2" fill="#3c3c3c" />
<rect x="1002.8000000000001" y="322" width="1.1" height="3.2" fill="#3c3c3c" />
<rect x="1004.85" y="322" width="1.1" height="3.2" fill="#3c3c3c" />
<rect x="1006.9" y="322" width="1.1" height="3.2" fill="#3c3c3c" />
<rect x="1008.95" y="322" width="1.1" height="3.2" fill="#3c3c3c" />
<rect x="1011.0" y="322" width="1.1" height="3.2" fill="#3c3c3c" />
<rect x="737.6" y="313.6" width="246.4" height="340" fill="#3e3e3e" />
<rect x="742.5" y="320.2" width="236.8" height="320.2" fill="#535353" />
<rect x="742.5" y="320.2" width="236.8" height="22.6" fill="#444444" />
<rect x="742.5" y="320.2" width="39.6" height="22.6" fill="#535353" />
<text x="747" y="333.6" font-size="10" fill="#e2e2e2" stroke="#e2e2e2" stroke-width="0.25" textLength="26" lengthAdjust="spacingAndGlyphs" >Layers</text>
<path d="M947.6 327.6 L950 330.2 L947.6 332.8 M951.6 327.6 L954 330.2 L951.6 332.8" fill="none" stroke="#c8c8c8" stroke-width="1.2"/>
<rect x="962.2" y="325.5" width="1" height="9.5" fill="#b0b0b0" />
<rect x="969.5" y="327.3" width="9.5" height="1.1" fill="#c0c0c0" />
<rect x="969.5" y="330.4" width="9.5" height="1.1" fill="#c0c0c0" />
<rect x="969.5" y="333.5" width="9.5" height="1.1" fill="#c0c0c0" />
<rect x="742.5" y="348.8" width="236.8" height="18.45" fill="#51667f" />
<rect x="742.5" y="367.15000000000003" width="236.8" height="0.9" fill="#5c5c5c" />
<rect x="762.2" y="348.8" width="1" height="18.35" fill="#5d6f85" />
<rect x="946.3" y="348.8" width="1" height="18.35" fill="#5d6f85" />
<path d="M746.8 357.6 C749.3 352.7 756.1 352.7 758.6 357.6 C756.1 362.5 749.3 362.5 746.8 357.6 Z" fill="#c8c8c8"/><circle cx="752.7" cy="357.6" r="2.3" fill="#4a4a4a"/><circle cx="753.4" cy="357.1" r="0.9" fill="#c8c8c8"/>
<rect x="783.6" y="350.0" width="3" height="16.25" fill="#4a7cf7" />
<path d="M794.8 356.0 L798 359.2 L801.2 356.0" fill="none" stroke="#e0e0e0" stroke-width="1.3"/>
<rect x="810.5" y="350.4" width="16" height="16" fill="#ffffff" stroke="#1e1e1e" stroke-width="1.2"/>
<rect x="814.3" y="352.3" width="8" height="11.5" fill="#9dc4e9"/><path d="M814.3 363.8 L814.3 360.8 L822.3 358.8 L822.3 363.8 Z" fill="#84ad61"/><rect x="816.5" y="355.8" width="4" height="2" fill="#e6eaed"/>
<text x="831.6" y="362.8" font-size="10" fill="#e4e4e4" stroke="#e4e4e4" stroke-width="0.25" textLength="30" lengthAdjust="spacingAndGlyphs" >Layer 1</text>
<circle cx="955.8" cy="358.2" r="3.5" fill="none" stroke="#d0d0d0" stroke-width="1.1"/>
<rect x="965.2" y="355.3" width="5.6" height="5.6" fill="#4a7cf7" stroke="#1a1a1a" stroke-width="1"/>
<path d="M974 348.8 L979.3 348.8 L979.3 353.8 Z" fill="#e8e8e8"/>
<rect x="742.5" y="386.40000000000003" width="236.8" height="0.9" fill="#5c5c5c" />
<rect x="762.2" y="368.05" width="1" height="18.35" fill="#5e5e5e" />
<rect x="946.3" y="368.05" width="1" height="18.35" fill="#5e5e5e" />
<path d="M746.8 376.9 C749.3 372.0 756.1 372.0 758.6 376.9 C756.1 381.8 749.3 381.8 746.8 376.9 Z" fill="#c8c8c8"/><circle cx="752.7" cy="376.9" r="2.3" fill="#4a4a4a"/><circle cx="753.4" cy="376.4" r="0.9" fill="#c8c8c8"/>
<rect x="783.6" y="369.25" width="3" height="16.25" fill="#4a7cf7" />
<rect x="831.3" y="369.4" width="16.2" height="16.2" fill="#ffffff" stroke="#1e1e1e" stroke-width="1.2"/>
<path d="M833.5 379.9 C833 377.4 835 375.9 836.5 376.4 C837 373.9 840.5 373.4 842 374.9 C844 373.9 846 375.9 845.5 377.9 C846 379.9 844 380.9 842 380.4 C840 381.4 837 381.4 835.5 380.4 Z" fill="#dfe5ea"/>
<text x="852.9" y="381.75" font-size="10" fill="#dcdcdc" stroke="#dcdcdc" stroke-width="0.25" textLength="30.5" lengthAdjust="spacingAndGlyphs" >&lt;Path&gt;</text>
<circle cx="955.8" cy="377.4" r="5.3" fill="none" stroke="#c0c0c0" stroke-width="1"/><circle cx="955.8" cy="377.4" r="3.4" fill="none" stroke="#d8d8d8" stroke-width="1.1"/>
<rect x="964.8" y="373.9" width="7.3" height="7.3" fill="#4a7cf7" stroke="#1a1a1a" stroke-width="1"/>
<rect x="742.5" y="405.65000000000003" width="236.8" height="0.9" fill="#5c5c5c" />
<rect x="762.2" y="387.3" width="1" height="18.35" fill="#5e5e5e" />
<rect x="946.3" y="387.3" width="1" height="18.35" fill="#5e5e5e" />
<path d="M746.8 396.1 C749.3 391.2 756.1 391.2 758.6 396.1 C756.1 401.0 749.3 401.0 746.8 396.1 Z" fill="#c8c8c8"/><circle cx="752.7" cy="396.1" r="2.3" fill="#4a4a4a"/><circle cx="753.4" cy="395.6" r="0.9" fill="#c8c8c8"/>
<rect x="783.6" y="388.5" width="3" height="16.25" fill="#4a7cf7" />
<path d="M815.5 393.1 L818.5 396.1 L815.5 399.1" fill="none" stroke="#e0e0e0" stroke-width="1.3"/>
<rect x="831.3" y="388.6" width="16.2" height="16.2" fill="#ffffff" stroke="#1e1e1e" stroke-width="1.2"/>
<rect x="839" y="389.6" width="1" height="14.2" fill="#f5b5bb" />
<text x="852.9" y="401.0" font-size="10" fill="#dcdcdc" stroke="#dcdcdc" stroke-width="0.25" textLength="55" lengthAdjust="spacingAndGlyphs" >&lt;Clip Group&gt;</text>
<circle cx="955.8" cy="396.6" r="5.3" fill="none" stroke="#c0c0c0" stroke-width="1"/><circle cx="955.8" cy="396.6" r="3.4" fill="none" stroke="#d8d8d8" stroke-width="1.1"/>
<rect x="964.8" y="393.1" width="7.3" height="7.3" fill="#4a7cf7" stroke="#1a1a1a" stroke-width="1"/>
<rect x="742.5" y="424.90000000000003" width="236.8" height="0.9" fill="#5c5c5c" />
<rect x="762.2" y="406.55" width="1" height="18.35" fill="#5e5e5e" />
<rect x="946.3" y="406.55" width="1" height="18.35" fill="#5e5e5e" />
<path d="M746.8 415.4 C749.3 410.5 756.1 410.5 758.6 415.4 C756.1 420.2 749.3 420.2 746.8 415.4 Z" fill="#c8c8c8"/><circle cx="752.7" cy="415.4" r="2.3" fill="#4a4a4a"/><circle cx="753.4" cy="414.9" r="0.9" fill="#c8c8c8"/>
<rect x="783.6" y="407.75" width="3" height="16.25" fill="#4a7cf7" />
<path d="M815.5 412.4 L818.5 415.4 L815.5 418.4" fill="none" stroke="#e0e0e0" stroke-width="1.3"/>
<rect x="831.3" y="407.9" width="16.2" height="16.2" fill="#ffffff" stroke="#1e1e1e" stroke-width="1.2"/>
<path d="M836 423.2 L836 416.4 L843.6 409.1 L843.6 423.2 Z" fill="#bce794"/>
<text x="852.9" y="420.25" font-size="10" fill="#dcdcdc" stroke="#dcdcdc" stroke-width="0.25" textLength="55" lengthAdjust="spacingAndGlyphs" >&lt;Clip Group&gt;</text>
<circle cx="955.8" cy="415.9" r="5.3" fill="none" stroke="#c0c0c0" stroke-width="1"/><circle cx="955.8" cy="415.9" r="3.4" fill="none" stroke="#d8d8d8" stroke-width="1.1"/>
<rect x="964.8" y="412.4" width="7.3" height="7.3" fill="#4a7cf7" stroke="#1a1a1a" stroke-width="1"/>
<rect x="742.5" y="444.15000000000003" width="236.8" height="0.9" fill="#5c5c5c" />
<rect x="762.2" y="425.8" width="1" height="18.35" fill="#5e5e5e" />
<rect x="946.3" y="425.8" width="1" height="18.35" fill="#5e5e5e" />
<path d="M746.8 434.6 C749.3 429.7 756.1 429.7 758.6 434.6 C756.1 439.5 749.3 439.5 746.8 434.6 Z" fill="#c8c8c8"/><circle cx="752.7" cy="434.6" r="2.3" fill="#4a4a4a"/><circle cx="753.4" cy="434.1" r="0.9" fill="#c8c8c8"/>
<rect x="783.6" y="427.0" width="3" height="16.25" fill="#4a7cf7" />
<path d="M815.5 431.6 L818.5 434.6 L815.5 437.6" fill="none" stroke="#e0e0e0" stroke-width="1.3"/>
<rect x="831.3" y="427.1" width="16.2" height="16.2" fill="#ffffff" stroke="#1e1e1e" stroke-width="1.2"/>
<path d="M832 431.1 L847 434.1 L847 442.3 L832 442.3 Z" fill="#84ad61"/>
<text x="852.9" y="439.5" font-size="10" fill="#dcdcdc" stroke="#dcdcdc" stroke-width="0.25" textLength="55" lengthAdjust="spacingAndGlyphs" >&lt;Clip Group&gt;</text>
<circle cx="955.8" cy="435.1" r="5.3" fill="none" stroke="#c0c0c0" stroke-width="1"/><circle cx="955.8" cy="435.1" r="3.4" fill="none" stroke="#d8d8d8" stroke-width="1.1"/>
<rect x="964.8" y="431.6" width="7.3" height="7.3" fill="#4a7cf7" stroke="#1a1a1a" stroke-width="1"/>
<rect x="742.5" y="463.40000000000003" width="236.8" height="0.9" fill="#5c5c5c" />
<rect x="762.2" y="445.05" width="1" height="18.35" fill="#5e5e5e" />
<rect x="946.3" y="445.05" width="1" height="18.35" fill="#5e5e5e" />
<path d="M746.8 453.9 C749.3 449.0 756.1 449.0 758.6 453.9 C756.1 458.8 749.3 458.8 746.8 453.9 Z" fill="#c8c8c8"/><circle cx="752.7" cy="453.9" r="2.3" fill="#4a4a4a"/><circle cx="753.4" cy="453.4" r="0.9" fill="#c8c8c8"/>
<rect x="783.6" y="446.25" width="3" height="16.25" fill="#4a7cf7" />
<path d="M815.5 450.9 L818.5 453.9 L815.5 456.9" fill="none" stroke="#e0e0e0" stroke-width="1.3"/>
<rect x="831.3" y="446.4" width="16.2" height="16.2" fill="#ffffff" stroke="#1e1e1e" stroke-width="1.2"/>
<path d="M833.5 448.4 L845 448.4 L845 456.4 L841 460.9 L833.5 460.9 Z" fill="#9dc4e9"/>
<text x="852.9" y="458.75" font-size="10" fill="#dcdcdc" stroke="#dcdcdc" stroke-width="0.25" textLength="55" lengthAdjust="spacingAndGlyphs" >&lt;Clip Group&gt;</text>
<circle cx="955.8" cy="454.4" r="5.3" fill="none" stroke="#c0c0c0" stroke-width="1"/><circle cx="955.8" cy="454.4" r="3.4" fill="none" stroke="#d8d8d8" stroke-width="1.1"/>
<rect x="964.8" y="450.9" width="7.3" height="7.3" fill="#4a7cf7" stroke="#1a1a1a" stroke-width="1"/>
<rect x="742.5" y="482.65000000000003" width="236.8" height="0.9" fill="#5c5c5c" />
<rect x="762.2" y="464.3" width="1" height="18.35" fill="#5e5e5e" />
<rect x="946.3" y="464.3" width="1" height="18.35" fill="#5e5e5e" />
<path d="M746.8 473.1 C749.3 468.2 756.1 468.2 758.6 473.1 C756.1 478.0 749.3 478.0 746.8 473.1 Z" fill="#c8c8c8"/><circle cx="752.7" cy="473.1" r="2.3" fill="#4a4a4a"/><circle cx="753.4" cy="472.6" r="0.9" fill="#c8c8c8"/>
<rect x="783.6" y="465.5" width="3" height="16.25" fill="#4a7cf7" />
<rect x="831.3" y="465.6" width="16.2" height="16.2" fill="#ffffff" stroke="#1e1e1e" stroke-width="1.2"/>
<text x="852.9" y="478.0" font-size="10" fill="#dcdcdc" stroke="#dcdcdc" stroke-width="0.25" textLength="30.5" lengthAdjust="spacingAndGlyphs" >&lt;Path&gt;</text>
<circle cx="955.8" cy="473.6" r="3.5" fill="none" stroke="#d0d0d0" stroke-width="1.1"/>
<rect x="742.5" y="501.90000000000003" width="236.8" height="0.9" fill="#5c5c5c" />
<rect x="762.2" y="483.55" width="1" height="18.35" fill="#5e5e5e" />
<rect x="946.3" y="483.55" width="1" height="18.35" fill="#5e5e5e" />
<path d="M746.8 492.4 C749.3 487.5 756.1 487.5 758.6 492.4 C756.1 497.2 749.3 497.2 746.8 492.4 Z" fill="#c8c8c8"/><circle cx="752.7" cy="492.4" r="2.3" fill="#4a4a4a"/><circle cx="753.4" cy="491.9" r="0.9" fill="#c8c8c8"/>
<rect x="783.6" y="484.75" width="3" height="16.25" fill="#4a7cf7" />
<rect x="831.3" y="484.9" width="16.2" height="16.2" fill="#ffffff" stroke="#1e1e1e" stroke-width="1.2"/>
<text x="852.9" y="497.25" font-size="10" fill="#dcdcdc" stroke="#dcdcdc" stroke-width="0.25" textLength="30.5" lengthAdjust="spacingAndGlyphs" >&lt;Path&gt;</text>
<circle cx="955.8" cy="492.9" r="3.5" fill="none" stroke="#d0d0d0" stroke-width="1.1"/>
<rect x="742.5" y="521.15" width="236.8" height="0.9" fill="#5c5c5c" />
<rect x="762.2" y="502.8" width="1" height="18.35" fill="#5e5e5e" />
<rect x="946.3" y="502.8" width="1" height="18.35" fill="#5e5e5e" />
<path d="M746.8 511.6 C749.3 506.7 756.1 506.7 758.6 511.6 C756.1 516.5 749.3 516.5 746.8 511.6 Z" fill="#c8c8c8"/><circle cx="752.7" cy="511.6" r="2.3" fill="#4a4a4a"/><circle cx="753.4" cy="511.1" r="0.9" fill="#c8c8c8"/>
<rect x="783.6" y="504.0" width="3" height="16.25" fill="#4a7cf7" />
<rect x="831.3" y="504.1" width="16.2" height="16.2" fill="#ffffff" stroke="#1e1e1e" stroke-width="1.2"/>
<text x="852.9" y="516.5" font-size="10" fill="#dcdcdc" stroke="#dcdcdc" stroke-width="0.25" textLength="30.5" lengthAdjust="spacingAndGlyphs" >&lt;Path&gt;</text>
<circle cx="955.8" cy="512.1" r="3.5" fill="none" stroke="#d0d0d0" stroke-width="1.1"/>
<rect x="742.5" y="623.3" width="236.8" height="0.9" fill="#5e5e5e" />
<text x="743.7" y="637" font-size="10" fill="#dcdcdc" stroke="#dcdcdc" stroke-width="0.25" textLength="29.3" lengthAdjust="spacingAndGlyphs" >1 Layer</text>
<path d="M833.5 628 L829 628 L829 637.8 L839 637.8 L839 633" fill="none" stroke="#c8c8c8" stroke-width="1.2"/><path d="M834.5 632.5 L840 627 M836 627 L840 627 L840 631" fill="none" stroke="#c8c8c8" stroke-width="1.2"/>
<circle cx="856" cy="631" r="3.6" fill="none" stroke="#c8c8c8" stroke-width="1.4"/><path d="M858.6 633.6 L863.5 638" stroke="#c8c8c8" stroke-width="1.8"/>
<rect x="876.5" y="627.5" width="7" height="7" fill="#8a8a8a" stroke="#c8c8c8" stroke-width="1.2"/><rect x="879.8" y="630.8" width="7" height="7" fill="none" stroke="#c8c8c8" stroke-width="1.2"/>
<path d="M898.5 627.5 L898.5 631 L902.5 631" fill="none" stroke="#c8c8c8" stroke-width="1.2"/><rect x="903.5" y="627.5" width="9.5" height="9.5" fill="none" stroke="#c8c8c8" stroke-width="1.2"/><path d="M908.2 629.5 V635 M905.5 632.2 H911" stroke="#c8c8c8" stroke-width="1.2"/>
<rect x="926" y="627.5" width="9.8" height="10" fill="none" stroke="#c8c8c8" stroke-width="1.2"/><path d="M930.9 629.6 V635.4 M928 632.5 H933.8" stroke="#c8c8c8" stroke-width="1.2"/>
<path d="M949.5 629.5 H959 M951 629.5 V638 H957.5 V629.5 M952.5 629.5 V627.8 H956 V629.5 M953 631 V636.5 M955.5 631 V636.5" fill="none" stroke="#666666" stroke-width="1"/>
<rect x="735.6" y="644.6" width="248.5" height="5" fill="#474747" />
<rect x="851.0" y="646.5" width="0.9" height="1.8" fill="#2f2f2f" />
<rect x="852.6" y="646.5" width="0.9" height="1.8" fill="#2f2f2f" />
<rect x="854.2" y="646.5" width="0.9" height="1.8" fill="#2f2f2f" />
<rect x="855.8" y="646.5" width="0.9" height="1.8" fill="#2f2f2f" />
<rect x="857.4" y="646.5" width="0.9" height="1.8" fill="#2f2f2f" />
<rect x="859.0" y="646.5" width="0.9" height="1.8" fill="#2f2f2f" />
<rect x="860.6" y="646.5" width="0.9" height="1.8" fill="#2f2f2f" />
<rect x="862.2" y="646.5" width="0.9" height="1.8" fill="#2f2f2f" />
<rect x="863.8" y="646.5" width="0.9" height="1.8" fill="#2f2f2f" />
<path d="M77 88.3 L238.6 88.3" stroke="#f80000" stroke-width="4" stroke-linecap="round"/>
<path d="M241.58 92.55 L274.97 146.20 L275.14 140.24 L278.14 140.33 L277.70 156.00 L263.82 148.72 L265.21 146.06 L270.49 148.83 L240.02 93.45 Z" fill="#de1219" stroke="#de1219" stroke-width="0.4" stroke-linejoin="round"/>
<rect x="280" y="163.7" width="292.2" height="427" rx="1.6" fill="none" stroke="#ff0000" stroke-width="5"/>
<path d="M581.40 420.50 L720.32 418.53 L715.10 415.29 L716.68 412.74 L730.00 421.00 L716.72 429.34 L715.13 426.79 L720.33 423.53 L581.40 422.30 Z" fill="#de1219" stroke="#de1219" stroke-width="0.4" stroke-linejoin="round"/>
<rect x="740.3" y="318" width="241.4" height="324.3" rx="1.5" fill="none" stroke="#ff0000" stroke-width="4.8"/>
<rect x="987.6" y="318.8" width="32.2" height="37" rx="2" fill="none" stroke="#ff0000" stroke-width="4.8"/>
</svg></body></html>
